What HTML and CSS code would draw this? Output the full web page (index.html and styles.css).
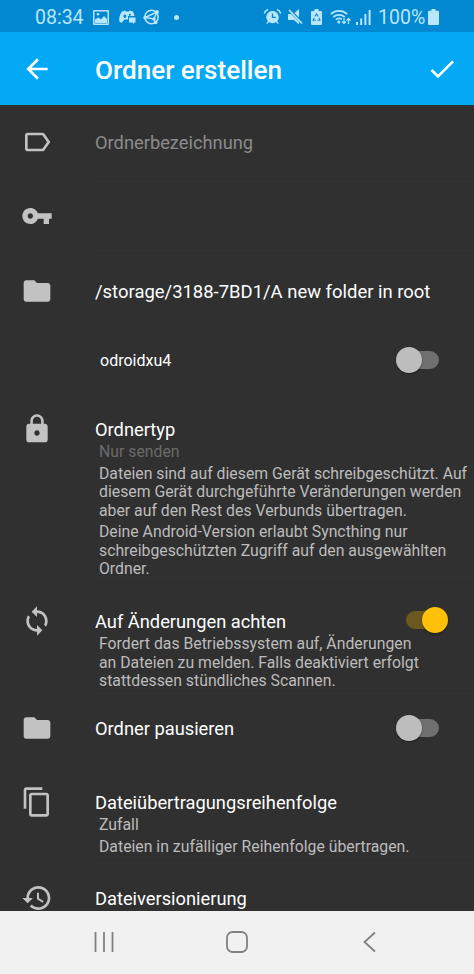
FILE: index.html
```html
<!DOCTYPE html>
<html lang="de">
<head>
<meta charset="utf-8">
<title>Ordner erstellen</title>
<link rel="stylesheet" href="styles.css">
</head>
<body>
<header class="status">
  <span class="clock">08:34</span>
  <svg class="s-pic" viewBox="0 0 16 15"><path fill-rule="evenodd" d="M1 0h14a1 1 0 0 1 1 1v13a1 1 0 0 1-1 1H1a1 1 0 0 1-1-1V1a1 1 0 0 1 1-1zM1.500 1.500v12h13v-12z"/><path d="M2 13V9.500l3.500-2 2.500 2 3-3.500 3 3v4z"/><circle cx="5" cy="4.300" r="1.300"/></svg>
  <svg class="s-game" viewBox="0 0 17 14"><path fill-rule="evenodd" d="M3 1.500L6 .5l.8 1h3L11 .5l3 1 1.700 4.500H9v3.500H5.500L2.500 13 .3 11.500C-.2 8 .9 4 3 1.500zM5.800 4.500a1.500 1.700 0 1 0 .1 0zM10.800 3.800a1 1 0 1 0 .1 0z"/><path d="M10 7.500h6.500v5H15v1.500L13.200 12.500H10z"/></svg>
  <svg class="s-sync" viewBox="0 0 17 16"><g fill="none" stroke="currentColor" stroke-width="1.500"><circle cx="8.500" cy="8" r="6.700"/><path d="M2 8.500l9 1.500 3-7M2 8.500L14 3M11 10l1.500 4"/></g><circle cx="14" cy="3" r="1.900"/><circle cx="2" cy="8.500" r="1.700"/><circle cx="11" cy="10" r="1.700"/><circle cx="12.800" cy="13.500" r="1.700"/></svg>
  <span class="dot"></span>
  <span class="fill"></span>
  <svg class="s-alarm" viewBox="0 0 17 16"><path fill-rule="evenodd" d="M8.500 2a6.200 6.200 0 0 1 4.700 10.200l1.600 2-1 .9-1.800-2a6.200 6.200 0 0 1-7 0l-1.800 2-1-.9 1.600-2A6.200 6.200 0 0 1 8.500 2zM7.800 4.500V9h4V7.800H9.100V4.500z"/><path d="M.3 4.500A6 6 0 0 1 4 .5M13 .5a6 6 0 0 1 3.700 4" fill="none" stroke="currentColor" stroke-width="1.500"/></svg>
  <svg class="s-mute" viewBox="0 0 15 16"><path d="M0 5h3l8 8v2.500L6 11H0zM6.500 4L11 0v8.500z"/><path d="M1 1l13 13.500" stroke="currentColor" stroke-width="1.800"/></svg>
  <svg class="s-recycle" viewBox="0 0 11 16"><path fill-rule="evenodd" d="M3.500 0h4v2H10a1 1 0 0 1 1 1v12a1 1 0 0 1-1 1H1a1 1 0 0 1-1-1V3a1 1 0 0 1 1-1h2.500z"/><path d="M3.800 7.500l1.700-2.500L7.200 7.500M8 9l1 2.300H6.500M4.800 11.300H2L3.200 9" fill="none" stroke="#0a86cf" stroke-width="1.100"/></svg>
  <svg class="s-wifi" viewBox="0 0 21 16"><g fill="none" stroke="currentColor" stroke-width="1.700"><path d="M.8 5.200a12 12 0 0 1 16.400 0M3.300 8a8.500 8.500 0 0 1 11.400 0M5.800 10.700a5 5 0 0 1 6-.5"/><path stroke-width="1.200" d="M14 9v5.500M12 12.500l2 2 2-2M18.500 15V9.500M16.500 11.500l2-2 2 2"/></g><circle cx="8.800" cy="13" r="1.500"/></svg>
  <svg class="s-signal" viewBox="0 0 15 16"><path d="M0 13h2v3H0zM4.200 9.500h2V16h-2zM8.400 5h2v11h-2zM12.600 1h2v15h-2z"/></svg>
  <span class="percent">100%</span>
  <svg class="s-batt" viewBox="0 0 11 16"><path d="M3.500 0h4v1.800H10a1 1 0 0 1 1 1V15a1 1 0 0 1-1 1H1a1 1 0 0 1-1-1V2.800a1 1 0 0 1 1-1h2.500z"/></svg>
</header>
<div class="toolbar">
  <svg class="icon" viewBox="0 0 24 24"><path d="M20 11H7.830l5.590-5.590L12 4l-8 8 8 8 1.410-1.410L7.830 13H20z"/></svg>
  <h1>Ordner erstellen</h1>
  <svg class="icon" viewBox="0 0 24 24"><path d="M9 16.170L4.830 12l-1.420 1.410L9 19 21 7l-1.410-1.410z"/></svg>
</div>
<main>
  <section class="row r-label">
    <svg class="icon" viewBox="0 0 24 24"><path d="M17.630 5.840C17.270 5.330 16.670 5 16 5L5 5.010C3.900 5.010 3 5.900 3 7v10c0 1.100.9 1.990 2 1.990L16 19c.67 0 1.270-.33 1.630-.84L22 12zM16 17H5V7h11l3.550 5z"/></svg>
    <div class="body line"><p class="title hint">Ordnerbezeichnung</p></div>
  </section>
  <section class="row r-key">
    <svg class="icon" viewBox="0 0 24 24"><path d="M12.650 10C11.830 7.670 9.610 6 7 6c-3.310 0-6 2.690-6 6s2.690 6 6 6c2.610 0 4.830-1.670 5.650-4H17v4h4v-4h2v-4zM7 14c-1.100 0-2-.9-2-2s.9-2 2-2 2 .9 2 2-.9 2-2 2z"/></svg>
    <div class="body line"></div>
  </section>
  <section class="row r-path">
    <svg class="icon" viewBox="0 0 24 24"><path d="M10 4H4c-1.100 0-1.990.9-1.990 2L2 18c0 1.100.9 2 2 2h16c1.100 0 2-.9 2-2V8c0-1.100-.9-2-2-2h-8z"/></svg>
    <div class="body"><p class="title path">/storage/3188-7BD1/A new folder in root</p></div>
  </section>
  <section class="row r-device">
    <p class="device">odroidxu4</p>
    <span class="switch"></span>
  </section>
  <section class="row r-type">
    <svg class="icon" viewBox="0 0 24 24"><path d="M18 8h-1V6c0-2.760-2.240-5-5-5S7 3.240 7 6v2H6c-1.100 0-2 .9-2 2v10c0 1.100.9 2 2 2h12c1.100 0 2-.9 2-2V10c0-1.100-.9-2-2-2zm-6 9c-1.100 0-2-.9-2-2s.9-2 2-2 2 .9 2 2-.9 2-2 2zm3.100-9H8.900V6c0-1.710 1.390-3.100 3.100-3.100s3.100 1.390 3.100 3.100z"/></svg>
    <div class="body line">
      <p class="title">Ordnertyp</p>
      <p class="desc first dim">Nur senden</p>
      <p class="desc gap">Dateien sind auf diesem Gerät schreibgeschützt. Auf<br>diesem Gerät durchgeführte Veränderungen werden<br>aber auf den Rest des Verbunds übertragen.</p>
      <p class="desc gap">Deine Android-Version erlaubt Syncthing nur<br>schreibgeschützten Zugriff auf den ausgewählten<br>Ordner.</p>
    </div>
  </section>
  <section class="row r-watch">
    <svg class="icon" viewBox="0 0 24 24"><path d="M12 4V1L8 5l4 4V6c3.310 0 6 2.690 6 6 0 1.010-.25 1.970-.7 2.800l1.460 1.460C19.540 15.030 20 13.570 20 12c0-4.420-3.580-8-8-8zm0 14c-3.310 0-6-2.690-6-6 0-1.010.25-1.970.7-2.800L5.240 7.740C4.460 8.970 4 10.430 4 12c0 4.420 3.580 8 8 8v3l4-4-4-4z"/></svg>
    <div class="body line">
      <p class="title">Auf Änderungen achten</p>
      <p class="desc first">Fordert das Betriebssystem auf, Änderungen<br>an Dateien zu melden. Falls deaktiviert erfolgt<br>stattdessen stündliches Scannen.</p>
    </div>
    <span class="switch on"></span>
  </section>
  <section class="row r-pause">
    <svg class="icon" viewBox="0 0 24 24"><path d="M10 4H4c-1.100 0-1.990.9-1.990 2L2 18c0 1.100.9 2 2 2h16c1.100 0 2-.9 2-2V8c0-1.100-.9-2-2-2h-8z"/></svg>
    <div class="body"><p class="title">Ordner pausieren</p></div>
    <span class="switch"></span>
  </section>
  <section class="row r-order">
    <svg class="icon" viewBox="0 0 24 24"><path d="M16 1H4c-1.100 0-2 .9-2 2v14h2V3h12zm3 4H8c-1.100 0-2 .9-2 2v14c0 1.100.9 2 2 2h11c1.100 0 2-.9 2-2V7c0-1.100-.9-2-2-2zm0 16H8V7h11z"/></svg>
    <div class="body line">
      <p class="title">Dateiübertragungsreihenfolge</p>
      <p class="desc first">Zufall</p>
      <p class="desc gap">Dateien in zufälliger Reihenfolge übertragen.</p>
    </div>
  </section>
  <section class="row r-version">
    <svg class="icon" viewBox="0 0 24 24"><path d="M13 3c-4.970 0-9 4.030-9 9H1l3.890 3.890.07.14L9 12H6c0-3.870 3.130-7 7-7s7 3.130 7 7-3.130 7-7 7c-1.930 0-3.680-.79-4.940-2.060l-1.420 1.420C8.270 19.990 10.510 21 13 21c4.970 0 9-4.030 9-9s-4.030-9-9-9zm-1 5v5l4.280 2.540.72-1.210-3.500-2.080V8z"/></svg>
    <div class="body"><p class="title">Dateiversionierung</p></div>
  </section>
</main>
<nav class="nav">
  <svg viewBox="0 0 20 20"><path d="M1.500 0v20M10 0v20M18.500 0v20"/></svg>
  <svg viewBox="0 0 20 20"><rect x="0" y="0" width="20" height="20" rx="5.500"/></svg>
  <svg viewBox="0 0 20 20"><path d="M15 .5L4.500 10 15 19.500"/></svg>
</nav>
</body>
</html>
```
FILE: styles.css
```css
* { box-sizing: border-box; }
body {
  margin: 0;
  width: 474px;
  height: 974px;
  display: flex;
  flex-direction: column;
  overflow: hidden;
  background: #303030;
  font-family: Roboto, sans-serif;
  color: #fff;
}
p, h1 { margin: 0; white-space: nowrap; }
svg { flex: none; fill: currentColor; overflow: visible; }

.status {
  height: 32px;
  flex: none;
  display: flex;
  align-items: center;
  padding: 2px 35px 0 35px;
  background: #0288d1;
  color: #b9e6fb;
  font-size: 19.5px;
}
.clock { width: 58px; }
.s-pic { width: 16px; height: 15px; }
.s-game { width: 17px; height: 14px; margin-left: 10px; }
.s-sync { width: 17px; height: 16px; margin-left: 7px; }
.dot { width: 5px; height: 5px; border-radius: 50%; background: currentColor; margin-left: 14px; }
.fill { flex: 1; }
.s-alarm { width: 17px; height: 16px; }
.s-mute { width: 15px; height: 16px; margin-left: 7px; }
.s-recycle { width: 11px; height: 16px; margin-left: 8px; }
.s-wifi { width: 21px; height: 16px; margin-left: 8px; }
.s-signal { width: 15px; height: 16px; margin-left: 5px; }
.percent { margin-left: 7px; width: 47px; }
.s-batt { width: 11px; height: 16px; margin-left: 3px; }

.toolbar {
  height: 73px;
  flex: none;
  display: flex;
  align-items: center;
  padding: 1px 16px 0 21px;
  background: #03a9f4;
}
.toolbar h1 {
  flex: 1;
  margin-left: 42px;
  padding-top: 2px;
  font-size: 26.1px;
  line-height: 32px;
  font-weight: 500;
}
.icon { width: 32px; height: 32px; }

main {
  height: 806px;
  flex: none;
  overflow: hidden;
}
.row {
  display: flex;
  align-items: flex-start;
  padding: 21px 0 0 21px;
  position: relative;
}
.row .icon { color: #c2c2c2; }
.body {
  flex: 1;
  align-self: stretch;
  margin-left: 42px;
}
.line { border-bottom: 1px solid #2d2d2d; }
.title { font-size: 18.3px; line-height: 22px; padding-top: 6px; }
.path { font-size: 18.45px; }
.hint { color: #8b8b8b; }
.desc {
  margin-left: 4px;
  font-size: 15.8px;
  line-height: 18.5px;
  color: #bcbcbc;
}
.first { padding-top: 2px; }
.dim { color: #6b6b6b; }
.gap { margin-top: 3px; }

.r-label { height: 74px; }
.r-key { height: 75px; }
.r-path { height: 74px; }
.r-device { height: 64px; padding: 23px 34px 0 100px; justify-content: space-between; }
.device { font-size: 16px; line-height: 20px; }
.r-type { height: 191px; }
.r-watch { height: 108px; padding-top: 22px; }
.r-pause { height: 74px; }
.r-order { height: 96px; }
.r-version { height: 60px; }

.switch {
  position: relative;
  width: 41px;
  height: 18px;
  border-radius: 9px;
  background: #6f6f6f;
  margin-right: 1px;
}
.switch::before {
  content: "";
  position: absolute;
  left: -2px;
  top: -4px;
  width: 26px;
  height: 26px;
  border-radius: 50%;
  background: #bdbdbd;
  box-shadow: 0 1px 2px #0006;
}
.switch.on { background: #6d5821; }
.switch.on::before { left: 16px; background: #ffc107; }
.r-watch .switch, .r-pause .switch { position: absolute; right: 35px; margin: 0; }
.r-watch .switch { top: 28px; right: 27px; }
.r-pause .switch { top: 28px; }

.nav {
  flex: 1;
  display: flex;
  justify-content: center;
  gap: 113px;
  align-items: center;
  padding-bottom: 1px;
  background: #f1f1f1;
  color: #808080;
}
.nav svg {
  width: 20px;
  height: 20px;
  fill: none;
  stroke: currentColor;
  stroke-width: 1.8;
}
```
